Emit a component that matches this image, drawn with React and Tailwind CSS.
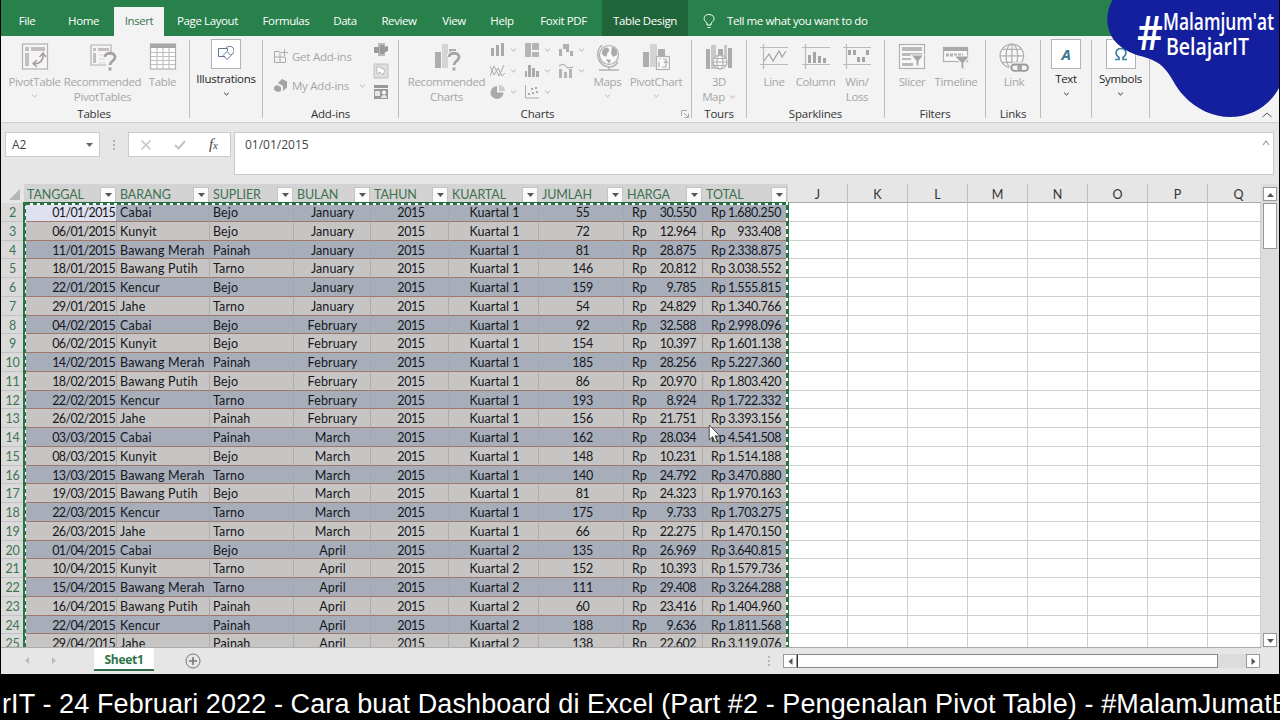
import clsx from 'clsx'

const TABS = [
  { label: 'File', className: 'w-[52px]' },
  { label: 'Home', className: 'w-[61px]' },
  { label: 'Insert', className: 'w-[50px]', active: true },
  { label: 'Page Layout', className: 'w-[87px]' },
  { label: 'Formulas', className: 'w-[70px]' },
  { label: 'Data', className: 'w-[48px]' },
  { label: 'Review', className: 'w-[60px]' },
  { label: 'View', className: 'w-[50px]' },
  { label: 'Help', className: 'w-[46px]' },
  { label: 'Foxit PDF', className: 'w-[77px]' },
  { label: 'Table Design', className: 'w-[86px]', context: true },
]

const HEADERS = ['TANGGAL', 'BARANG', 'SUPLIER', 'BULAN', 'TAHUN', 'KUARTAL', 'JUMLAH', 'HARGA', 'TOTAL']
const LETTERS = ['J', 'K', 'L', 'M', 'N', 'O', 'P', 'Q']

const ROWS = [
  ['01/01/2015', 'Cabai', 'Bejo', 'January', 1, '55', '30.550', '1.680.250'],
  ['06/01/2015', 'Kunyit', 'Bejo', 'January', 1, '72', '12.964', '933.408'],
  ['11/01/2015', 'Bawang Merah', 'Painah', 'January', 1, '81', '28.875', '2.338.875'],
  ['18/01/2015', 'Bawang Putih', 'Tarno', 'January', 1, '146', '20.812', '3.038.552'],
  ['22/01/2015', 'Kencur', 'Bejo', 'January', 1, '159', '9.785', '1.555.815'],
  ['29/01/2015', 'Jahe', 'Tarno', 'January', 1, '54', '24.829', '1.340.766'],
  ['04/02/2015', 'Cabai', 'Bejo', 'February', 1, '92', '32.588', '2.998.096'],
  ['06/02/2015', 'Kunyit', 'Bejo', 'February', 1, '154', '10.397', '1.601.138'],
  ['14/02/2015', 'Bawang Merah', 'Painah', 'February', 1, '185', '28.256', '5.227.360'],
  ['18/02/2015', 'Bawang Putih', 'Bejo', 'February', 1, '86', '20.970', '1.803.420'],
  ['22/02/2015', 'Kencur', 'Tarno', 'February', 1, '193', '8.924', '1.722.332'],
  ['26/02/2015', 'Jahe', 'Painah', 'February', 1, '156', '21.751', '3.393.156'],
  ['03/03/2015', 'Cabai', 'Painah', 'March', 1, '162', '28.034', '4.541.508'],
  ['08/03/2015', 'Kunyit', 'Bejo', 'March', 1, '148', '10.231', '1.514.188'],
  ['13/03/2015', 'Bawang Merah', 'Tarno', 'March', 1, '140', '24.792', '3.470.880'],
  ['19/03/2015', 'Bawang Putih', 'Bejo', 'March', 1, '81', '24.323', '1.970.163'],
  ['22/03/2015', 'Kencur', 'Tarno', 'March', 1, '175', '9.733', '1.703.275'],
  ['26/03/2015', 'Jahe', 'Tarno', 'March', 1, '66', '22.275', '1.470.150'],
  ['01/04/2015', 'Cabai', 'Bejo', 'April', 2, '135', '26.969', '3.640.815'],
  ['10/04/2015', 'Kunyit', 'Tarno', 'April', 2, '152', '10.393', '1.579.736'],
  ['15/04/2015', 'Bawang Merah', 'Tarno', 'April', 2, '111', '29.408', '3.264.288'],
  ['16/04/2015', 'Bawang Putih', 'Painah', 'April', 2, '60', '23.416', '1.404.960'],
  ['22/04/2015', 'Kencur', 'Painah', 'April', 2, '188', '9.636', '1.811.568'],
  ['29/04/2015', 'Jahe', 'Painah', 'April', 2, '138', '22.602', '3.119.076'],
]

const COLS =
  'grid grid-cols-[23px_93px_93px_84px_77px_78px_90px_85px_79px_85px_60px_60px_60px_60px_60px_60px_60px_53px]'

function Chevron({ className = 'text-[#555]' }) {
  return (
    <svg className={clsx('h-1.5 w-[7px] shrink-0', className)} viewBox="0 0 7 6" fill="none" stroke="currentColor">
      <path d="M1.2 1.8 3.5 4 5.8 1.8" />
    </svg>
  )
}

function Icon({ children, className = 'h-7 w-7' }) {
  return (
    <svg className={clsx('shrink-0', className)} viewBox="0 0 28 28" fill="none" stroke="#b2b0b1" strokeWidth="1.2">
      {children}
    </svg>
  )
}

function PivotTableIcon() {
  return (
    <Icon>
      <rect x="1.5" y="1" width="25" height="25" fill="#f6f4f5" />
      <path d="M4 4h4v4H4zM10 4h14v4H10zM4 10h4v13H4z" fill="#c2bec1" stroke="none" />
      <path d="M12.5 20.500c6 1 10-3 9.500-9M18.500 14l3.500-4 3 4M16 17l-4 3.500 4 3.500" stroke="#a3a1a2" strokeWidth="1.6" />
    </Icon>
  )
}

function RecommendedPivotIcon() {
  return (
    <Icon>
      <path d="M22 9V2H2v20h15" fill="#f6f4f5" />
      <path d="M4 5h3v3H4zM9 5h11v3H9zM4 10h3v10H4z" fill="#c2bec1" stroke="none" />
      <path d="M10 12h6M10 16h6M10 20h6" stroke="#d5d5d5" />
      <path d="M16 14c0-5 10-5 10 0 0 4-5 4-5 8M21 24.500v3" stroke="#a3a1a2" strokeWidth="2.800" />
    </Icon>
  )
}

function TableIcon() {
  return (
    <Icon>
      <rect x="1.500" y="1" width="25" height="25" fill="#fff" />
      <path d="M1 1h26v4H1z" fill="#a9a7a8" stroke="none" />
      <path d="M2 9.500h24M2 13.500h24M2 17.500h24M2 21.500h24M8 5v21M14 5v21M20 5v21" stroke="#c3bec1" />
    </Icon>
  )
}

function RecommendedChartIcon() {
  return (
    <Icon>
      <path d="M2 9h6v16H2z" fill="#aeacad" stroke="none" />
      <path d="M9 1h6v24H9z" fill="#d4d4d4" stroke="none" />
      <path d="M16 6h7v3h-7z" fill="#aaa" stroke="none" />
      <path d="M16 14c0-5 10-5 10 0 0 4-5 4-5 8M21 24.500v3" stroke="#f3f3f3" strokeWidth="5" />
      <path d="M16 14c0-5 10-5 10 0 0 4-5 4-5 8M21 24.500v3" stroke="#a5a3a4" strokeWidth="2.800" />
    </Icon>
  )
}

function MapsIcon() {
  return (
    <Icon>
      <circle cx="15" cy="12" r="9.500" fill="#f8f8f8" />
      <path d="M8 8c3-5 7-4 7-1s-2 2-2 5-4 1-5-1zM18 4c4 1 6 5 5 8l-4 2-2-4zM12 16l5 1-2 4z" fill="#aaa" stroke="none" />
      <path d="M8 2C0 9 4 23 15 24c4 0 7-2 9-5M15 24v3M5 27h20" strokeWidth="1.500" />
    </Icon>
  )
}

function PivotChartIcon() {
  return (
    <Icon>
      <path d="M1 9h6v15H1zM16 6h7v7h-7z" fill="#aeacad" stroke="none" />
      <path d="M8 1h7v23H8z" fill="#d4d4d4" stroke="none" />
      <rect x="14.500" y="13.500" width="13" height="13" fill="#f8f8f8" />
      <path d="M17 16h2M21 16h4M17 19v5M20 24h4v-6M22 20l2-2.500 2 2.500" />
    </Icon>
  )
}

function Map3dIcon() {
  return (
    <Icon>
      <path d="M1 6h4v20H1zM13 6h5v8h-5zM23 5h4v20h-4z" fill="#acacac" stroke="none" />
      <path d="M6 2h5v24H6zM19 2h3v20h-3z" fill="#c8c8c8" stroke="none" />
      <circle cx="15" cy="19" r="7" fill="#f6f6f6" />
      <ellipse cx="15" cy="19" rx="3" ry="7" />
      <path d="M8 19h14M9 15.500h12M9 22.500h12" />
    </Icon>
  )
}

function LineIcon() {
  return (
    <Icon>
      <path d="M0 4.500h28M0 21.500h28M3.500 1v25" stroke="#b9b9b9" />
      <path d="m4 18 5-7 4 7 6-10 3 6 4-6" stroke="#a0a0a0" />
    </Icon>
  )
}

function ColumnIcon() {
  return (
    <Icon>
      <path d="M0 4.500h28M0 21.500h28M3.500 1v25" stroke="#b9b9b9" />
      <path d="M6 12h3v8H6zM11 9h3v11h-3zM16 13h3v7h-3zM21 15h3v5h-3z" fill="#a5a5a5" stroke="none" />
    </Icon>
  )
}

function WinLossIcon() {
  return (
    <Icon>
      <path d="M0 4.500h28M0 21.500h28M3.500 1v25" stroke="#b9b9b9" />
      <path d="M5 7h3v5H5zM10 7h3v5h-3zM23 7h3v5h-3zM14 14h3v5h-3zM19 14h3v5h-3z" fill="#a5a5a5" stroke="none" />
    </Icon>
  )
}

function SlicerIcon() {
  return (
    <Icon>
      <rect x="1.500" y="1.500" width="25" height="24" fill="#f8f8f8" />
      <path d="M4 4h20v4H4zM4 10h20v3H4zM4 15h9v2H4zM4 20h11v3H4z" fill="#b9b9b9" stroke="none" />
      <path d="M13 12h13l-5 6v6l-3-2v-4z" fill="#a5a5a5" stroke="#f3f3f3" />
    </Icon>
  )
}

function TimelineIcon() {
  return (
    <Icon>
      <rect x="1.500" y="4.500" width="24" height="14" fill="#f8f8f8" />
      <path d="M1 4h25v4H1z" fill="#a9a9a9" stroke="none" />
      <path d="M4 12h17" strokeWidth="3" strokeDasharray="3 1" />
      <path d="M12 13h16l-6 7v7l-3-2v-5z" fill="#a5a5a5" stroke="#f3f3f3" />
    </Icon>
  )
}

function LinkIcon() {
  return (
    <Icon className="h-[30px] w-[30px]">
      <circle cx="12" cy="12" r="11" fill="#f8f8f8" />
      <ellipse cx="12" cy="12" rx="5.500" ry="11" />
      <path d="M1 12h22M3 6h18M3 18h18M12 1v22" />
      <rect x="11.500" y="20" width="16" height="6" rx="3" fill="#f3f3f3" stroke="#f3f3f3" strokeWidth="4" />
      <rect x="11.500" y="20" width="9" height="6" rx="3" stroke="#999" strokeWidth="1.800" />
      <rect x="18" y="20" width="9" height="6" rx="3" stroke="#999" strokeWidth="1.800" />
    </Icon>
  )
}

const MINI_CHARTS = [
  <path key="col" d="M1 6h3v8H1zM6 3h3v11H6zM11 1h3v13h-3z" fill="#aaa" stroke="none" />,
  <path key="tree" d="M1 1h6v14H1zM8 1h7v7H8zM8 10h7v5H8z" fill="#b5b5b5" stroke="none" />,
  <path key="fall" d="M1 7h3v7H1zM5 2h3v5H5zM8 2h3v8H8zM12 9h3v5h-3z" fill="#b0b0b0" stroke="none" />,
  <path key="line" d="m0 13 4-10 5 10 5-11M0 3l4 9 4-7 4 8 3-3" stroke="#aaa" />,
  <path key="hist" d="M1 8h2v6H1zM4 2h3v12H4zM8 5h3v9H8zM12 8h3v6h-3z" fill="#aaa" stroke="none" />,
  <g key="combo">
    <path d="M1 6h3v9H1zM6 9h3v6H6zM11 6h3v9h-3z" fill="#b5b5b5" stroke="none" />
    <path d="m1 3 4-2 5 4 5-1" stroke="#999" />
  </g>,
  <g key="pie">
    <path d="M7 2a6.500 6.500 0 1 0 6.500 6.500H7z" fill="#aaa" stroke="none" />
    <path d="M9 1a6 6 0 0 1 6 6H9z" fill="#ccc" stroke="none" />
  </g>,
  <g key="scatter">
    <path d="M1.500 1v13H15" stroke="#aaa" />
    <path d="M4 10h2M7 5h2M8 9h2M11 4h2M12 8h2" stroke="#aaa" strokeWidth="1.800" />
  </g>,
]

function MiniCharts() {
  return (
    <div className="-mt-px grid w-[102px] grid-cols-[34px_34px_34px] content-start gap-y-[5px]">
      {MINI_CHARTS.map((shape) => (
        <div key={shape.key} className="flex items-center gap-1">
          <svg className="h-4 w-4" viewBox="0 0 16 16" fill="none">
            {shape}
          </svg>
          <Chevron className="text-[#aaa]" />
        </div>
      ))}
    </div>
  )
}

function Group({ label, className, labelClassName, children, launcher }) {
  return (
    <section className={clsx('flex shrink-0 flex-col pt-1', className)}>
      <div className="relative flex h-[78px] flex-col border-r border-[#bcbcbc]">
        <div className="flex h-[67px] shrink-0 pt-[3px]">{children}</div>
        {label && (
          <div className={clsx('text-center text-[11.500px] leading-[14px] tracking-[-0.2px] text-[#333]', labelClassName)}>
            {label}
          </div>
        )}
        {launcher && (
          <svg className="absolute right-[2px] bottom-0 h-2 w-2" viewBox="0 0 8 8" fill="none" stroke="#aaa">
            <path d="M.5 6V.5H6M3 3l4 4M7.500 3.500v4h-4" />
          </svg>
        )}
      </div>
    </section>
  )
}

function Command({ icon, lines, className, chevron }) {
  return (
    <div
      className={clsx(
        'flex shrink-0 flex-col items-center text-[11.500px] leading-[15px] tracking-[-0.350px] text-[#a6a6a6]',
        className,
      )}
    >
      <div className="flex h-[31px] shrink-0 justify-center">{icon}</div>
      {lines.map((line, i) => (
        <div key={i} className="whitespace-nowrap">
          {line}
        </div>
      ))}
      {chevron && <Chevron className="mt-1 text-[#b5b5b5]" />}
    </div>
  )
}

function BoxCommand({ label, children }) {
  return (
    <div className="-mt-1 flex w-full flex-col items-center text-[11.500px] tracking-[-0.3px] text-[#262626]">
      <div className="flex h-[30px] w-[30px] items-center justify-center border border-[#b0b3b8] bg-white">{children}</div>
      <div className="mt-[2px] leading-[16px]">{label}</div>
      <Chevron className="mt-[4px]" />
    </div>
  )
}

function Ribbon() {
  return (
    <div className="flex h-[87px] border-b border-[#cfcfcf] bg-[#f3f3f3]">
      <Group label="Tables" className="w-[189px]" labelClassName="pr-0.5">
        <Command icon={<PivotTableIcon />} lines={['PivotTable']} className="w-[67px]" chevron />
        <Command icon={<RecommendedPivotIcon />} lines={['Recommended', 'PivotTables']} className="w-[69px]" />
        <Command icon={<TableIcon />} lines={['Table']} className="w-[51px]" />
      </Group>
      <Group className="w-[73px]">
        <BoxCommand label="Illustrations">
          <svg className="h-4 w-4" viewBox="0 0 16 16" fill="none" stroke="#5d7793">
            <path d="M7 10.500H.5v-8h9V5M8 2a4.500 4.500 0 1 1 5 7M9 5.500l4 4-4 4-4-4z" />
          </svg>
        </BoxCommand>
      </Group>
      <Group label="Add-ins" className="w-[136px]">
        <div className="flex w-[108px] flex-col gap-[14px] pt-1.5 pl-2.5 text-[11.500px] leading-[15px] tracking-[-0.250px] text-[#a6a6a6]">
          <div className="flex items-center gap-1">
            <svg className="h-[15px] w-[15px]" viewBox="0 0 15 15" fill="none" stroke="#aaa">
              <path d="M6.500 2.500h-5v11h11v-5M1.500 8h11M7 2.500v11M11.500 0v7M8 3.500h7" />
            </svg>
            <span className="whitespace-nowrap">Get Add-ins</span>
          </div>
          <div className="flex items-center gap-1">
            <svg className="h-[15px] w-[15px]" viewBox="0 0 15 15" fill="#a3a3a3">
              <path d="m9 1 5 2.500v6L10 13V8L5 5zM1 9l3-2 4 2v4l-3 1-4-2z" />
            </svg>
            <span className="whitespace-nowrap">My Add-ins</span>
            <Chevron className="ml-1.5 text-[#aaa]" />
          </div>
        </div>
        <div className="-mt-px flex flex-col gap-[5px] pl-[2px]">
          <svg className="h-4 w-4" viewBox="0 0 16 16" fill="#999">
            <path d="M5 1h7v13H5z" fill="#b9b9b9" />
            <path d="M1 5h5v6H1zM7 3h4v9H7zM10 5l5-1v5l-5 2z" />
          </svg>
          <svg className="h-4 w-4" viewBox="0 0 16 16" fill="none" stroke="#c0c0c0">
            <path d="M1 1h14v14H1z" fill="#dedede" />
            <path d="M4 3v8l3-2 3 3 2-5-8-4" fill="#fff" stroke="#bbb" />
          </svg>
          <svg className="h-4 w-4" viewBox="0 0 16 16" fill="#999">
            <path d="M1 1h14v3H1zM1 5h14v10H1z" />
            <path d="M2 7h5v5H2zM8 14c0-4 6-4 6 0z" fill="#e8e8e8" />
            <circle cx="11" cy="8.500" r="2" fill="#fff" />
          </svg>
        </div>
      </Group>
      <Group label="Charts" className="w-[293px]" labelClassName="pr-[15px]" launcher>
        <Command icon={<RecommendedChartIcon />} lines={['Recommended', 'Charts']} className="w-[91px] pl-1" />
        <MiniCharts />
        <Command icon={<MapsIcon />} lines={['Maps']} className="w-[31px]" chevron />
        <Command icon={<PivotChartIcon />} lines={['PivotChart']} className="w-[66px]" chevron />
      </Group>
      <Group label="Tours" className="w-[55px]">
        <Command
          icon={<Map3dIcon />}
          lines={[
            '3D',
            <span key="map" className="flex items-center gap-1">
              Map <Chevron className="text-[#aaa]" />
            </span>,
          ]}
          className="w-full"
        />
      </Group>
      <Group label="Sparklines" className="w-[138px]">
        <Command icon={<LineIcon />} lines={['Line']} className="w-[54px]" />
        <Command icon={<ColumnIcon />} lines={['Column']} className="w-[29px]" />
        <Command icon={<WinLossIcon />} lines={['Win/', 'Loss']} className="w-[54px]" />
      </Group>
      <Group label="Filters" className="w-[101px]">
        <Command icon={<SlicerIcon />} lines={['Slicer']} className="w-[54px]" />
        <Command icon={<TimelineIcon />} lines={['Timeline']} className="w-[34px]" />
      </Group>
      <Group label="Links" className="w-[55px]">
        <Command icon={<LinkIcon />} lines={['Link']} className="w-full pl-0.5" />
      </Group>
      <Group className="w-[51px]">
        <BoxCommand label="Text">
          <span className="text-[15px] font-bold text-[#3d7392] italic">A</span>
        </BoxCommand>
      </Group>
      <Group className="w-[58px]">
        <BoxCommand label="Symbols">
          <svg className="h-3.5 w-3.5" viewBox="0 0 14 14" fill="none" stroke="#3d7f9f" strokeWidth="1.700">
            <path d="M1 12.500h4v-2C.5 7.500 1.500 1.500 7 1.500s6.500 6 2 9v2h4" />
          </svg>
        </BoxCommand>
      </Group>
      <div className="flex flex-1 items-end justify-end pr-[6px] pb-[3px]">
        <svg className="h-2 w-3" viewBox="0 0 12 8" fill="none" stroke="#555">
          <path d="m1.500 6 4.500-4 4.500 4" />
        </svg>
      </div>
    </div>
  )
}

function TabBar() {
  return (
    <div className="flex h-9 items-end bg-[#28804a] text-[11.500px] font-medium tracking-[-0.4px] text-white">
      {TABS.map((tab) => (
        <div
          key={tab.label}
          className={clsx(
            'flex shrink-0 items-center justify-center whitespace-nowrap',
            tab.className,
            tab.active && 'h-[29px] bg-[#f3f3f3] pb-px text-[#3c7350]',
            tab.context && 'h-full bg-[#20653a] pt-[6px]',
            !tab.active && !tab.context && 'h-[29px] pb-px',
          )}
        >
          {tab.label}
        </div>
      ))}
      <div className="flex h-[29px] items-center gap-3 pb-px pl-[15px]">
        <svg className="h-4 w-3" viewBox="0 0 12 16" fill="none" stroke="#fff">
          <path d="M4 12v-2C1 8 .5 5 2 3s6-2 8 0 1 5-2 7v2zM4.500 14.500h3" />
        </svg>
        <span className="whitespace-nowrap">Tell me what you want to do</span>
      </div>
    </div>
  )
}

function FormulaBar() {
  return (
    <div className="flex h-[61px] items-start bg-[#e6e6e6] pt-[9px] pl-1 text-[12px] text-[#444]">
      <div className="flex h-[25px] w-[95px] items-center justify-between border border-[#cbcbcb] bg-white px-1.5">
        <span>A2</span>
        <svg className="h-1 w-[7px]" viewBox="0 0 7 4" fill="#666">
          <path d="M0 0h7L3.500 4z" />
        </svg>
      </div>
      <div className="flex h-[25px] w-[28px] flex-col items-center justify-center gap-[2px]">
        <i className="h-0.5 w-0.5 bg-[#b0b0b0]" />
        <i className="h-0.5 w-0.5 bg-[#b0b0b0]" />
        <i className="h-0.5 w-0.5 bg-[#b0b0b0]" />
      </div>
      <div className="flex h-[25px] w-[103px] items-center justify-between border border-[#cbcbcb] bg-white pr-3 pl-3">
        <svg className="h-2.5 w-2.5" viewBox="0 0 10 10" fill="none" stroke="#c4c4c4" strokeWidth="1.500">
          <path d="m.5.5 9 9M9.500.5l-9 9" />
        </svg>
        <svg className="h-2.5 w-3" viewBox="0 0 12 10" fill="none" stroke="#c4c4c4" strokeWidth="2">
          <path d="m1 5 3.500 3.500L11 1" />
        </svg>
        <span className="font-['Liberation_Serif',serif] text-[15px] text-[#444] italic">
          f<span className="text-[11px]">x</span>
        </span>
      </div>
      <div className="ml-[3px] flex h-[43px] w-[1040px] items-start justify-between border border-[#cbcbcb] bg-white pt-[3px] pr-[3px] pl-2.5">
        <span>01/01/2015</span>
        <svg className="mt-1 h-1.5 w-2" viewBox="0 0 8 6" fill="none" stroke="#999" strokeWidth="1.200">
          <path d="m1 5 3-4 3 4" />
        </svg>
      </div>
    </div>
  )
}

function ColumnHeaders() {
  return (
    <div className={clsx(COLS, 'h-[19px] grid-rows-[19px] text-[12.500px] leading-[19px]')}>
      <div className="flex items-end justify-end pr-1 pb-[3px]">
        <svg className="h-[11px] w-[11px]" viewBox="0 0 11 11" fill="#b5b5b5">
          <path d="M11 0v11H0z" />
        </svg>
      </div>
      {HEADERS.map((name) => (
        <div key={name} className="flex items-center justify-between bg-[#d3d3d3] pl-[3px] text-[#40714f]">
          <span className="pt-px tracking-[-0.1px]">{name}</span>
          <span className="mt-0.5 mr-px flex h-4 w-4 items-center justify-center border border-[#c4c4c4] bg-[#fafafa]">
            <svg className="h-1 w-[7px]" viewBox="0 0 7 4" fill="#555">
              <path d="M0 0h7L3.500 4z" />
            </svg>
          </span>
        </div>
      ))}
      {LETTERS.map((letter) => (
        <div
          key={letter}
          className={clsx(
            'border-b border-[#ababab] pt-px text-center text-[#333]',
            letter === 'Q' ? 'pl-2' : 'border-r border-r-[#bdbdbd]',
          )}
        >
          {letter}
        </div>
      ))}
    </div>
  )
}

function Row({ row, index }) {
  const [date, item, supplier, month, quarter, qty, price, total] = row
  const banded = index % 2 === 0
  const cell = clsx(
    'min-h-0 overflow-hidden whitespace-nowrap border-b border-b-[#a0776b] border-r',
    banded ? 'bg-[#a7aeba] border-r-[#a3a9b4]' : 'bg-[#c7c5c4] border-r-[#aeabaa]',
  )
  return (
    <div className={clsx(COLS, 'grid-rows-[18.750px] text-[12.500px] leading-[20.500px] text-[#15171c]')}>
      <div className="min-h-0 overflow-hidden border-b border-[#c2c2c2] bg-[#dadada] text-center tracking-[-0.3px] text-[#417451]">
        {index + 2}
      </div>
      <div className={clsx(cell, 'pr-px text-right tracking-[-0.650px]', index === 0 && 'bg-[#dfe1f1]!')}>{date}</div>
      <div className={clsx(cell, 'pl-[3px] tracking-[0.180px]')}>{item}</div>
      <div className={clsx(cell, 'pl-[3px] tracking-[0.120px]')}>{supplier}</div>
      <div className={clsx(cell, 'pl-px text-center tracking-[0.120px]')}>{month}</div>
      <div className={clsx(cell, 'pl-[3px] text-center tracking-[-0.4px]')}>2015</div>
      <div className={clsx(cell, 'pl-[2px] text-center')}>Kuartal {quarter}</div>
      <div className={clsx(cell, 'pl-[3px] text-center tracking-[-0.4px]')}>{qty}</div>
      <div className={clsx(cell, 'flex justify-between pr-1.5 pl-2')}>
        <span>Rp</span>
        <span className="tracking-[-0.5px]">{price}</span>
      </div>
      <div className={clsx(cell, 'flex justify-between pr-1.5 pl-2')}>
        <span>Rp</span>
        <span className="tracking-[-0.4px]">{total}</span>
      </div>
      {LETTERS.map((letter) => (
        <div key={letter} className="border-r border-b border-[#cfcfcf] bg-white" />
      ))}
    </div>
  )
}

function ArrowButton({ direction, className }) {
  const paths = {
    up: 'M0 6h7L3.500 2z',
    down: 'M0 2h7L3.500 6z',
    left: 'M5.500 0v7L1.500 3.500z',
    right: 'M1.500 0v7l4-3.500z',
  }
  return (
    <div className={clsx('flex shrink-0 items-center justify-center border border-[#999] bg-white', className)}>
      <svg className="h-[7px] w-[7px]" viewBox="0 0 7 7" fill="#555">
        <path d={paths[direction]} />
      </svg>
    </div>
  )
}

function Sheet() {
  return (
    <div className="flex h-[464px] bg-[#e6e6e6] font-[Lato,sans-serif]">
      <div className="relative h-full w-[1260px] overflow-hidden border-b border-[#ababab]">
        <ColumnHeaders />
        {ROWS.map((row, index) => (
          <Row key={row[0]} row={row} index={index} />
        ))}

        {/* marching ants around the copied range */}
        <div className="absolute top-[18px] left-[22px] h-[3px] w-[766px] border-t border-[#20693a] bg-[repeating-linear-gradient(90deg,#fff_0_3px,#2b7445_3px_7px)]" />
        <div className="absolute top-[18px] left-[22px] h-[450px] w-[3px] border-l-2 border-[#2b7445] bg-[repeating-linear-gradient(180deg,#2b7445_0_4px,#fff_4px_7px)]" />
        <div className="absolute top-[18px] left-[785px] h-[450px] w-[3px] border-r border-[#2b7445] bg-[repeating-linear-gradient(180deg,#fff_0_3px,#2b7445_3px_8px)]" />

        <svg className="absolute top-[240px] left-[707px] h-[19px] w-[13px]" viewBox="0 0 12 18" fill="#fff" stroke="#333" strokeWidth=".8">
          <path d="M1 1v14l3.200-3 2.200 5 2.200-1-2.200-4.700H11z" />
        </svg>
      </div>
      <div className="flex flex-1 flex-col items-center bg-[#dcdcdc] pt-[3px] pb-px">
        <ArrowButton direction="up" className="h-[14px] w-[14px]" />
        <div className="mt-[2px] h-[46px] w-[14px] border border-[#999] bg-white" />
        <ArrowButton direction="down" className="mt-auto h-[14px] w-[14px]" />
      </div>
    </div>
  )
}

function SheetTabs() {
  return (
    <div className="flex h-[26px] items-start bg-[#e6e6e6]">
      <div className="flex h-6 w-[93px] items-center gap-[21px] pl-6">
        <svg className="h-[7px] w-[5px]" viewBox="0 0 5 7" fill="#bbb">
          <path d="M4 0v7L0 3.500z" />
        </svg>
        <svg className="h-[7px] w-[5px]" viewBox="0 0 5 7" fill="#bbb">
          <path d="M1 0v7l4-3.500z" />
        </svg>
      </div>
      <div className="flex h-[23px] w-[60px] items-center justify-center border-b-2 border-[#2d6c44] bg-white pt-[3px] text-[12px] font-bold tracking-[-0.3px] text-[#2b7446]">
        Sheet1
      </div>
      <svg className="mt-[5px] ml-[31px] h-4 w-4" viewBox="0 0 16 16" fill="none" stroke="#777">
        <circle cx="8" cy="8" r="7" />
        <path d="M4 8h8M8 4v8" strokeWidth="1.600" />
      </svg>
      <div className="mt-2 mr-[13px] ml-auto flex flex-col gap-[2px]">
        <i className="h-0.5 w-0.5 bg-[#b5b5b5]" />
        <i className="h-0.5 w-0.5 bg-[#b5b5b5]" />
        <i className="h-0.5 w-0.5 bg-[#b5b5b5]" />
      </div>
      <div className="mt-[6px] mr-[19px] flex w-[477px] bg-[#dcdcdc]">
        <ArrowButton direction="left" className="h-[14px] w-[14px]" />
        <div className="h-[14px] w-[421px] border border-[#888] border-l-[#333] bg-white" />
        <ArrowButton direction="right" className="ml-auto h-[14px] w-[14px]" />
      </div>
    </div>
  )
}

function Logo() {
  return (
    <svg className="absolute top-0 right-px h-[120px] w-[179px]" viewBox="1100 0 179 120">
      <path
        d="M1112.500 0C1108 8 1106 18 1108 27c3 14 14 22 26 27 12 4 21 5 29 13 9 9 12 20 21 29 12 13 29 21 46 21 22 0 40-12 49-29V0z"
        fill="#141f9e"
      />
      <g fill="#fff" fontFamily="'Open Sans', sans-serif">
        <text x="1137" y="50" fontSize="47" fontWeight="600" textLength="26" lengthAdjust="spacingAndGlyphs">#</text>
        <text x="1163" y="30" fontSize="24" fontWeight="600" textLength="111" lengthAdjust="spacingAndGlyphs">Malamjum'at</text>
        <text x="1166" y="55" fontSize="23" fontWeight="600" textLength="83" lengthAdjust="spacingAndGlyphs">BelajarIT</text>
      </g>
    </svg>
  )
}

export default function App() {
  return (
    <div className="relative h-[720px] w-[1280px] overflow-hidden bg-black font-['Open_Sans',sans-serif]">
      <div className="mx-px flex flex-col overflow-hidden">
        <TabBar />
        <Ribbon />
        <FormulaBar />
        <Sheet />
        <SheetTabs />
      </div>
      <Logo />
      <div className="overflow-hidden pt-[11px] pl-0.5 font-['Liberation_Sans',sans-serif] text-[27px] leading-[38px] tracking-[0.1px] whitespace-nowrap text-white">
        rIT - 24 Februari 2022 - Cara buat Dashboard di Excel (Part #2 - Pengenalan Pivot Table) - #MalamJumatBelajarIT
      </div>
    </div>
  )
}
